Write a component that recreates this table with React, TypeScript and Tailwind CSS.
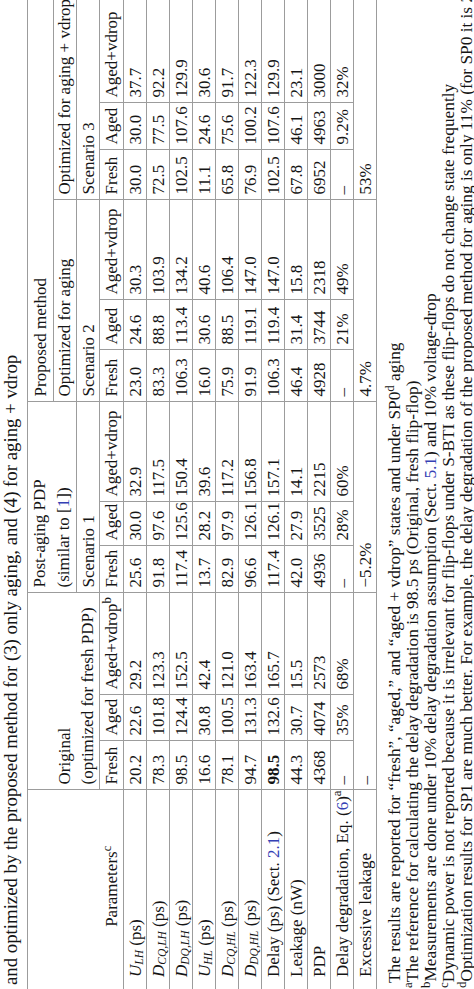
import React from "react";

const cell = "border border-[#9c9c9c] px-[5px] py-0 text-left align-middle whitespace-nowrap font-normal";
const first = "border-l-0 pl-[12px]";

const Link = ({ children }: { children: React.ReactNode }) => (
  <span className="text-[#3440b4]">{children}</span>
);

const Sym = ({ b, s }: { b: string; s: string }) => (
  <>
    <i>{b}</i>
    <sub className="italic text-[11.5px]">{s}</sub>
  </>
);

const data: { label: React.ReactNode; vals: React.ReactNode[] }[] = [
  { label: <><Sym b="U" s="LH" /> (ps)</>, vals: ["20.2", "22.6", "29.2", "25.6", "30.0", "32.9", "23.0", "24.6", "30.3", "30.0", "30.0", "37.7"] },
  { label: <><Sym b="D" s="CQ,LH" /> (ps)</>, vals: ["78.3", "101.8", "123.3", "91.8", "97.6", "117.5", "83.3", "88.8", "103.9", "72.5", "77.5", "92.2"] },
  { label: <><Sym b="D" s="DQ,LH" /> (ps)</>, vals: ["98.5", "124.4", "152.5", "117.4", "125.6", "150.4", "106.3", "113.4", "134.2", "102.5", "107.6", "129.9"] },
  { label: <><Sym b="U" s="HL" /> (ps)</>, vals: ["16.6", "30.8", "42.4", "13.7", "28.2", "39.6", "16.0", "30.6", "40.6", "11.1", "24.6", "30.6"] },
  { label: <><Sym b="D" s="CQ,HL" /> (ps)</>, vals: ["78.1", "100.5", "121.0", "82.9", "97.9", "117.2", "75.9", "88.5", "106.4", "65.8", "75.6", "91.7"] },
  { label: <><Sym b="D" s="DQ,HL" /> (ps)</>, vals: ["94.7", "131.3", "163.4", "96.6", "126.1", "156.8", "91.9", "119.1", "147.0", "76.9", "100.2", "122.3"] },
  { label: <>Delay (ps) (Sect. <Link>2.1</Link>)</>, vals: [<b key="b">98.5</b>, "132.6", "165.7", "117.4", "126.1", "157.1", "106.3", "119.4", "147.0", "102.5", "107.6", "129.9"] },
  { label: <>Leakage (nW)</>, vals: ["44.3", "30.7", "15.5", "42.0", "27.9", "14.1", "46.4", "31.4", "15.8", "67.8", "46.1", "23.1"] },
  { label: <>PDP</>, vals: ["4368", "4074", "2573", "4936", "3525", "2215", "4928", "3744", "2318", "6952", "4963", "3000"] },
  { label: <>Delay degradation, Eq. (<Link>6</Link>)<sup>a</sup></>, vals: ["–", "35%", "68%", "–", "28%", "60%", "–", "21%", "49%", "–", "9.2%", "32%"] },
];

const widths = [199, 49, 46, 102, 47, 44, 100, 52, 50, 100, 50, 47, 114];

export default function App() {
  return (
    <div className="w-[474px] h-[989px] overflow-hidden bg-white">
      <div className="w-[989px] h-[474px] overflow-hidden origin-top-left translate-y-[989px] -rotate-90 bg-white text-[#151515] font-['Liberation_Serif','Times_New_Roman',serif]">
        <p className="h-[27px] pl-[4px] text-[18.8px] leading-[21px] whitespace-nowrap">
          and optimized by the proposed method for (3) only aging, and (4) for aging + vdrop
        </p>
        <table className="w-[1000px] table-fixed border-collapse text-[17px] leading-[19px]">
          <colgroup>
            {widths.map((w, i) => (
              <col key={i} style={{ width: w }} />
            ))}
          </colgroup>
          <thead>
            <tr className="h-[25px]">
              <th rowSpan={4} className={`${cell} ${first} !text-center !align-bottom pb-[2px]`}>
                Parameters<sup>c</sup>
              </th>
              <th colSpan={3} rowSpan={3} className={`${cell} !align-bottom leading-[23px]`}>
                Original
                <br />
                (optimized for fresh PDP)
              </th>
              <th colSpan={3} rowSpan={2} className={`${cell} leading-[24px]`}>
                Post-aging PDP
                <br />
                (similar to [<Link>1</Link>])
              </th>
              <th colSpan={6} className={cell}>Proposed method</th>
            </tr>
            <tr className="h-[23px]">
              <th colSpan={3} className={cell}>Optimized for aging</th>
              <th colSpan={3} className={cell}>Optimized for aging + vdrop</th>
            </tr>
            <tr className="h-[23px]">
              <th colSpan={3} className={cell}>Scenario 1</th>
              <th colSpan={3} className={cell}>Scenario 2</th>
              <th colSpan={3} className={cell}>Scenario 3</th>
            </tr>
            <tr className="h-[24px]">
              <th className={cell}>Fresh</th>
              <th className={cell}>Aged</th>
              <th className={cell}>
                Aged+vdrop<sup>b</sup>
              </th>
              {[0, 1, 2].map((g) => (
                <React.Fragment key={g}>
                  <th className={cell}>Fresh</th>
                  <th className={cell}>Aged</th>
                  <th className={cell}>Aged+vdrop</th>
                </React.Fragment>
              ))}
            </tr>
          </thead>
          <tbody>
            {data.map((r, i) => (
              <tr key={i} className="h-[23px]">
                <td className={`${cell} ${first}`}>{r.label}</td>
                {r.vals.map((v, j) => (
                  <td key={j} className={cell}>
                    {v}
                  </td>
                ))}
              </tr>
            ))}
            <tr className="h-[23px]">
              <td className={`${cell} ${first}`}>Excessive leakage</td>
              <td colSpan={3} className={cell}>–</td>
              <td colSpan={3} className={cell}>−5.2%</td>
              <td colSpan={3} className={cell}>4.7%</td>
              <td colSpan={3} className={cell}>53%</td>
            </tr>
          </tbody>
        </table>
        <div className="mt-[9px] pl-[1px] text-[17.3px] leading-[18px] whitespace-nowrap">
          <p className="pl-[5px]">
            The results are reported for “fresh”, “aged,” and “aged + vdrop” states and under SP0<sup>d</sup> aging
          </p>
          <p>
            <sup>a</sup>The reference for calculating the delay degradation is 98.5 ps (Original, fresh flip-flop)
          </p>
          <p>
            <sup>b</sup>Measurements are done under 10% delay degradation assumption (Sect. <Link>5.1</Link>) and 10% voltage-drop
          </p>
          <p>
            <sup>c</sup>Dynamic power is not reported because it is irrelevant for flip-flops under S-BTI as these flip-flops do not change state frequently
          </p>
          <p>
            <sup>d</sup>Optimization results for SP1 are much better. For example, the delay degradation of the proposed method for aging is only 11% (for SP0 it is 21%)
          </p>
        </div>
      </div>
    </div>
  );
}
